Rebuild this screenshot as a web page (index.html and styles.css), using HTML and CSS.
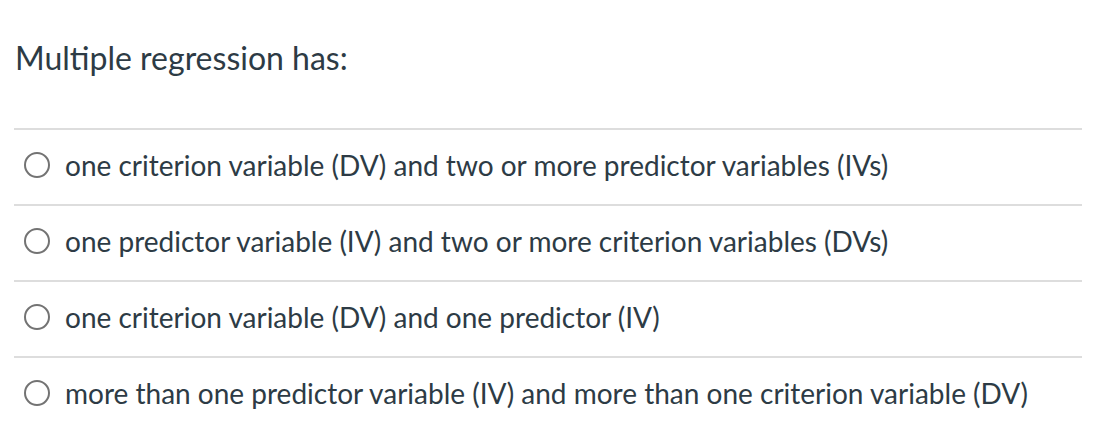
FILE: index.html
```html
<!DOCTYPE html>
<html>
<head>
<meta charset="utf-8">
<link rel="stylesheet" href="styles.css">
</head>
<body>
<div class="question">
  <div class="prompt">Multiple regression has:</div>
  <div class="answers">
    <label class="answer"><span class="radio"></span><span class="text">one criterion variable (DV) and two or more predictor variables (IVs)</span></label>
    <label class="answer"><span class="radio"></span><span class="text">one predictor variable (IV) and two or more criterion variables (DVs)</span></label>
    <label class="answer"><span class="radio"></span><span class="text">one criterion variable (DV) and one predictor (IV)</span></label>
    <label class="answer"><span class="radio"></span><span class="text">more than one predictor variable (IV) and more than one criterion variable (DV)</span></label>
  </div>
</div>
</body>
</html>
```
FILE: styles.css
```css
html, body {
  margin: 0;
  padding: 0;
  background: #ffffff;
}
body {
  font-family: Lato, "Open Sans", sans-serif;
  color: #2d3b45;
}
.question {
  width: 1068px;
  margin-left: 14px;
}
.prompt {
  font-size: 32px;
  line-height: 40px;
  padding-top: 38px;
  height: 88px;
  box-sizing: border-box;
  padding-left: 1px;
}
.answers {
  margin-top: 40px;
}
.answer {
  display: flex;
  align-items: center;
  height: 76px;
  box-sizing: border-box;
  border-top: 2px solid #dddddd;
  padding-left: 10px;
  padding-bottom: 4px;
}
.radio {
  width: 26px;
  height: 26px;
  box-sizing: border-box;
  border: 2px solid #737373;
  border-radius: 50%;
  flex: none;
}
.text {
  margin-left: 15px;
  font-size: 28px;
  line-height: 36px;
}
```
